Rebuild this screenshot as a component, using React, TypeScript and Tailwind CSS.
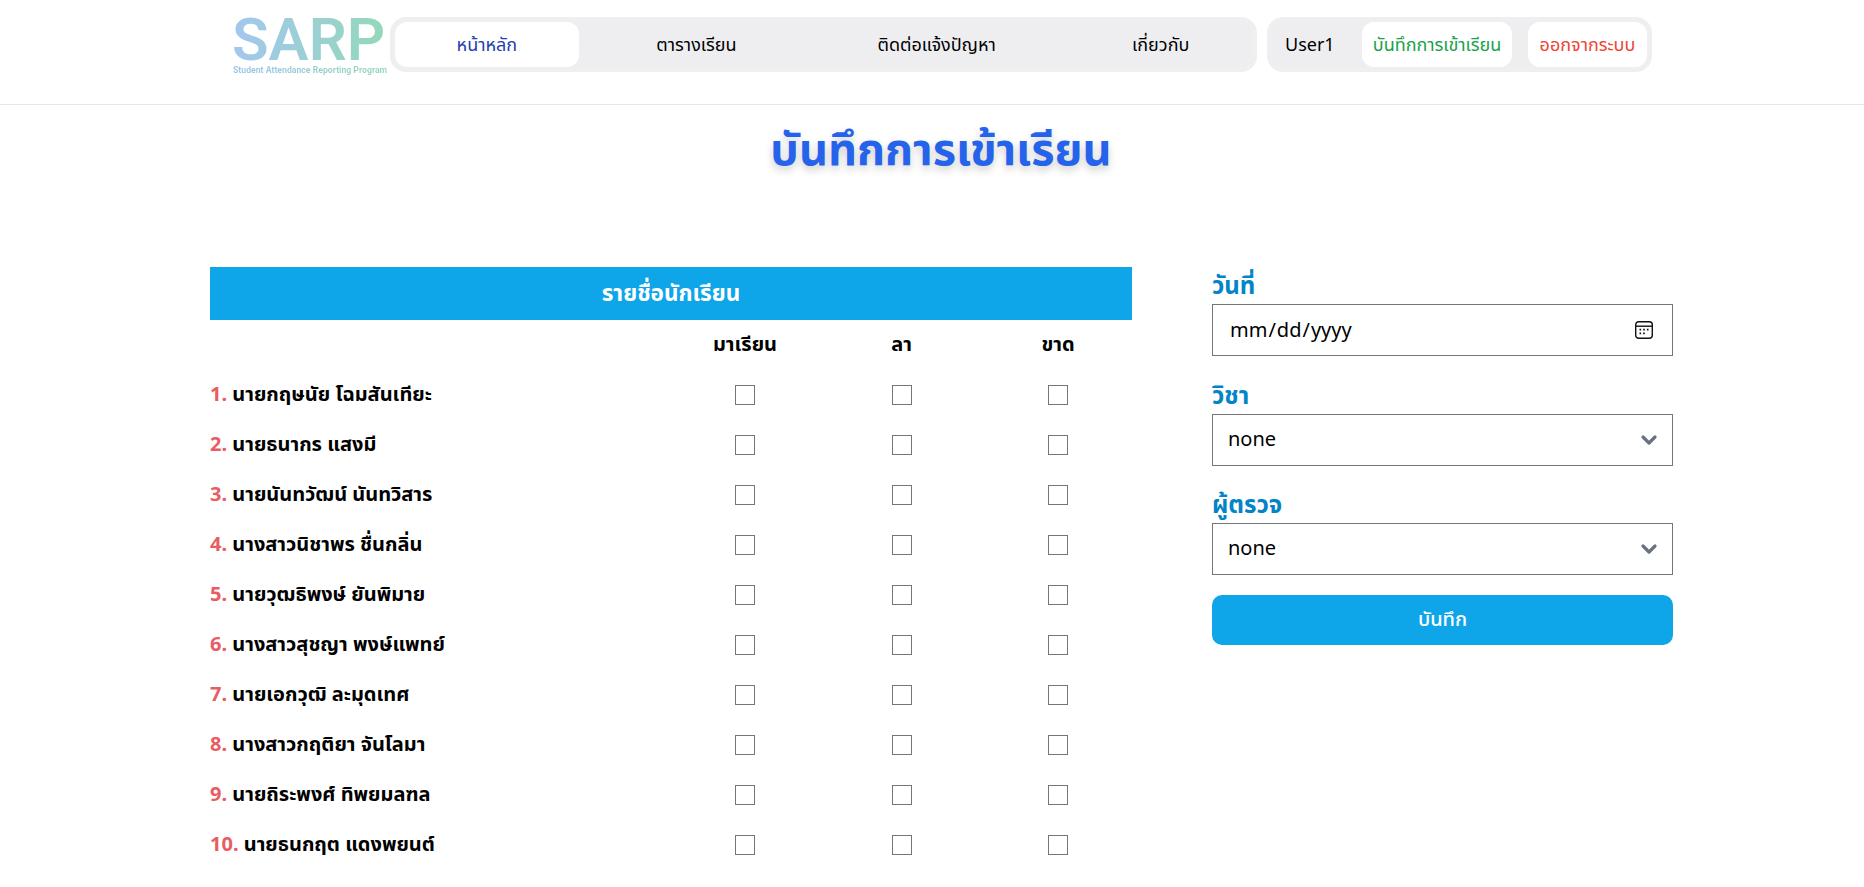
import { ChevronDown } from "lucide-react";

const students = [
    "นายกฤษนัย โฉมสันเทียะ",
    "นายธนากร แสงมี",
    "นายนันทวัฒน์ นันทวิสาร",
    "นางสาวนิชาพร ชื่นกลิ่น",
    "นายวุฒธิพงษ์ ยันพิมาย",
    "นางสาวสุชญา พงษ์แพทย์",
    "นายเอกวุฒิ ละมุดเทศ",
    "นางสาวกฤติยา จันโลมา",
    "นายถิระพงศ์ ทิพยมลฑล",
    "นายธนกฤต แดงพยนต์",
];

function SelectField({ label }: { label: string }) {
    return (
        <div className="mt-[21.5px]">
            <label className="block text-2xl leading-[34px] h-[36px] font-bold text-[#0284c7]">{label}</label>
            <div className="relative">
                <select className="appearance-none w-full h-[52px] bg-white border border-[#767676] pl-[15px] pr-4 pb-[2px] text-xl text-black">
                    <option>none</option>
                </select>
                <ChevronDown className="absolute right-[12px] top-[14px] w-6 h-6 text-gray-500 pointer-events-none" strokeWidth={3.2} />
            </div>
        </div>
    );
}

export default function App() {
    return (
        <div className="bg-white min-h-screen font-['Noto_Sans','Noto_Sans_Thai',sans-serif] text-black">
            <header className="h-[105px] border-b border-gray-200">
                <div className="flex pl-[232px] pt-[17px]">
                    <div className="w-[158px] -mt-[4px]">
                        <div className="font-['Roboto',sans-serif] font-semibold text-[60px] leading-[45px] pt-[4px] bg-gradient-to-r from-[#a3c6ef] to-[#93d9b6] bg-clip-text text-transparent">
                            SARP
                        </div>
                        <div className="mt-[3px] font-['Roboto',sans-serif] font-bold text-[8.7px] leading-[11px] pl-[1px] whitespace-nowrap bg-gradient-to-r from-[#9cc3ea] to-[#93d9b6] bg-clip-text text-transparent">
                            Student Attendance Reporting Program
                        </div>
                    </div>
                    <nav className="w-[867px] h-[55px] flex items-center bg-[#eeeef0] border-[5px] border-[#eeeff0] rounded-2xl text-lg">
                        <a className="w-[185px] h-[45px] pb-[2px] flex items-center justify-center bg-white rounded-xl text-[#1e40af]">หน้าหลัก</a>
                        <a className="w-[234px] pb-[2px] pl-[3px] text-center">ตารางเรียน</a>
                        <a className="w-[250px] pb-[2px] pl-[3px] text-center">ติดต่อแจ้งปัญหา</a>
                        <a className="ml-[5px] w-[189px] pb-[2px] pl-[5px] text-center">เกี่ยวกับ</a>
                    </nav>
                    <div className="ml-[10px] w-[385px] h-[55px] flex items-center bg-[#eeeef0] border-[5px] border-[#eeeff0] rounded-2xl text-lg">
                        <span className="ml-[13px] w-[77px] pb-[2px]">User1</span>
                        <a className="w-[150px] h-[45px] pb-[2px] flex items-center justify-center bg-white rounded-xl whitespace-nowrap text-[#16a34a]">บันทึกการเข้าเรียน</a>
                        <a className="ml-[16px] w-[119px] h-[45px] pb-[2px] flex items-center justify-center bg-white rounded-xl whitespace-nowrap text-[#ef4433]">ออกจากระบบ</a>
                    </div>
                </div>
            </header>

            <h1 className="pl-[18px] text-center text-[45px] leading-[60px] font-bold text-[#2563eb] mt-[13px] [text-shadow:0_4px_8px_rgba(0,0,0,0.2)]">
                บันทึกการเข้าเรียน
            </h1>

            <main className="flex pl-[210px] mt-[89px]">
                <section className="w-[922px]">
                    <div className="h-[53px] pb-[2px] flex items-center justify-center bg-[#0ea5e9] text-white text-[22.5px] font-bold">
                        รายชื่อนักเรียน
                    </div>
                    <div className="grid grid-cols-[457px_156px_157px_156px] w-[926px] h-[50px] pb-[2px] items-center text-center text-xl font-bold">
                        <span />
                        <span>มาเรียน</span>
                        <span>ลา</span>
                        <span>ขาด</span>
                    </div>
                    {students.map((name, i) => (
                        <div key={name} className="grid grid-cols-[457px_156px_157px_156px] w-[926px] h-[50px] items-center text-xl font-bold">
                            <div className="pb-[2px]">
                                <span className="text-[#e85d63]">{i + 1}.</span> {name}
                            </div>
                            <input type="checkbox" className="appearance-none justify-self-center w-5 h-5 border border-[#767676] bg-white" />
                            <input type="checkbox" className="appearance-none justify-self-center w-5 h-5 border border-[#767676] bg-white" />
                            <input type="checkbox" className="appearance-none justify-self-center w-5 h-5 border border-[#767676] bg-white" />
                        </div>
                    ))}
                </section>

                <aside className="ml-[80px] w-[461px] pt-[1px]">
                    <label className="block text-2xl leading-[34px] h-[36px] font-bold text-[#0284c7]">วันที่</label>
                    <div className="relative">
                        <input
                            type="date"
                            className="block w-full h-[52px] bg-white border border-[#767676] px-4 text-xl text-black [&::-webkit-calendar-picker-indicator]:opacity-0"
                        />
                        <svg
                            className="absolute right-[20px] top-[17px] w-[18px] h-[18px] pointer-events-none"
                            viewBox="0 0 18 18"
                            fill="none"
                            stroke="#111"
                            strokeWidth="1.4"
                        >
                            <rect x="0.7" y="0.7" width="16.6" height="16.6" rx="3" />
                            <path d="M1 5.2h16" />
                            <path d="M4.5 8.6h1.6M8.2 8.6h1.6M11.9 8.6h1.6M4.5 12.4h1.6M8.2 12.4h1.6" strokeWidth="1.8" />
                        </svg>
                    </div>
                    <SelectField label="วิชา" />
                    <SelectField label="ผู้ตรวจ" />
                    <button className="mt-5 w-full h-[50px] pb-[2px] rounded-[10px] bg-[#0ea5e9] text-white text-xl font-medium">บันทึก</button>
                </aside>
            </main>
        </div>
    );
}
